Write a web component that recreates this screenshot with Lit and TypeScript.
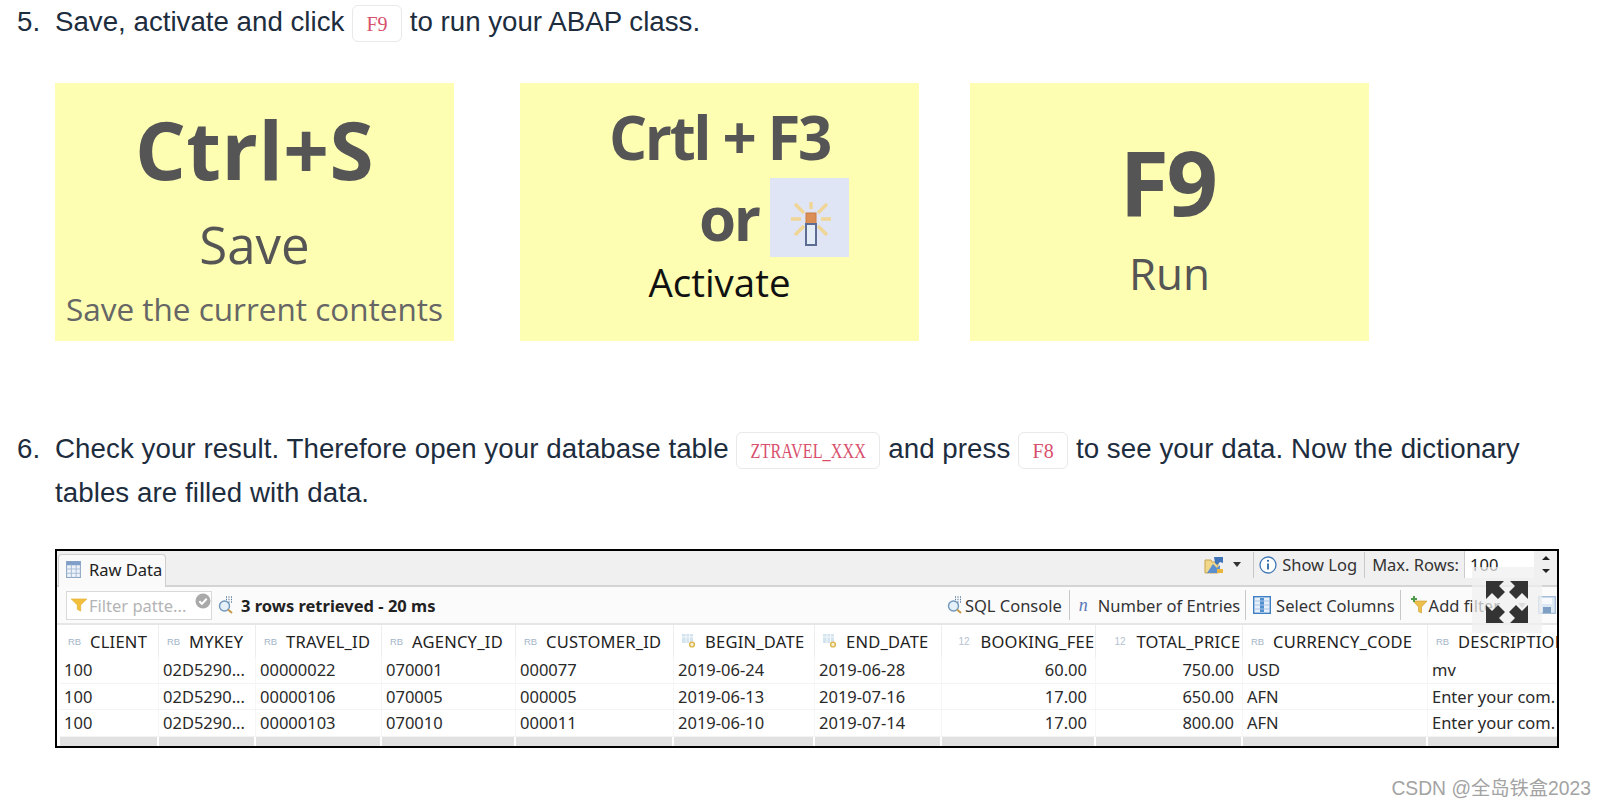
import { LitElement, html, css, svg } from "lit";
import { customElement } from "lit/decorators.js";

type Col = { name: string; kind: "rb" | "date" | "num" };
const cols: Col[] = [
  { name: "CLIENT", kind: "rb" },
  { name: "MYKEY", kind: "rb" },
  { name: "TRAVEL_ID", kind: "rb" },
  { name: "AGENCY_ID", kind: "rb" },
  { name: "CUSTOMER_ID", kind: "rb" },
  { name: "BEGIN_DATE", kind: "date" },
  { name: "END_DATE", kind: "date" },
  { name: "BOOKING_FEE", kind: "num" },
  { name: "TOTAL_PRICE", kind: "num" },
  { name: "CURRENCY_CODE", kind: "rb" },
  { name: "DESCRIPTION", kind: "rb" },
];
const rows = [
  ["100", "02D5290...", "00000022", "070001", "000077", "2019-06-24", "2019-06-28", "60.00", "750.00", "USD", "mv"],
  ["100", "02D5290...", "00000106", "070005", "000005", "2019-06-13", "2019-07-16", "17.00", "650.00", "AFN", "Enter your com."],
  ["100", "02D5290...", "00000103", "070010", "000011", "2019-06-10", "2019-07-14", "17.00", "800.00", "AFN", "Enter your com."],
];

const tableIcon = (w: number, h: number) => svg`<svg width=${w} height=${h} viewBox="0 0 14 16">
  <rect x=".5" y=".5" width="13" height="15" fill="#eef3fa" stroke="#8ea6c4"/>
  <rect x=".5" y=".5" width="13" height="3.500" fill="#7f9fc8"/>
  <path d="M.5 7.500h13M.5 11.500h13M5 3.500v12M9.500 3.500v12" stroke="#a9bdd6" fill="none"/></svg>`;
const dateIcon = svg`<svg width="14" height="14" viewBox="0 0 14 14">
  <rect x="0" y="0" width="11" height="9" fill="#d3e4ee"/>
  <path d="M0 3h11M4 0v9M7.500 0v9" stroke="#f4f8fb" fill="none"/>
  <circle cx="10" cy="10.500" r="2.400" fill="#f5f0d0" stroke="#dcb44a" stroke-width="1.400"/></svg>`;
const sqlIcon = svg`<svg width="16" height="18" viewBox="0 0 16 18">
  <circle cx="6.500" cy="10" r="5" fill="#e6f0f8" stroke="#6f97bd" stroke-width="1.400"/>
  <path d="M10 13.500l4 3.500" stroke="#c79a4a" stroke-width="2"/>
  <path d="M8 1h1M10.500 1h1M13 1h1M8 3.500h1M10.500 3.500h1M13 3.500h1M10.500 6h1M13 6h1" stroke="#5f7f9f" stroke-width="1.400"/></svg>`;
const funnel = svg`<svg width="16" height="14" viewBox="0 0 18 16"><path d="M0 1h18l-7 7v7l-4-2V8z" fill="#f2bf3c" stroke="#e0a830" stroke-width=".6"/></svg>`;
const check = svg`<svg width="16" height="16" viewBox="0 0 16 16"><circle cx="8" cy="8" r="7.500" fill="#a9a9a9"/><path d="M4.300 8.300l2.600 2.600 4.800-5.200" stroke="#fff" stroke-width="2" fill="none"/></svg>`;
const folder = svg`<svg width="20" height="18" viewBox="0 0 20 18">
  <path d="M1 4h6l1 2h6v11H1z" fill="#f0d78a" stroke="#c9a552"/>
  <path d="M3 17l6-9 4 4 3-3v8z" fill="#5b8fcf"/>
  <path d="M10 1h9v6l-3-1-3 3-2-2z" fill="#3f74b8"/>
  <path d="M13 13h6v4h-6z" fill="#e9b53c"/></svg>`;
const info = svg`<svg width="18" height="18" viewBox="0 0 18 18"><circle cx="9" cy="9" r="8" fill="#fff" stroke="#3f78b5" stroke-width="1.300"/><path d="M9 7.500v6" stroke="#2f68a5" stroke-width="1.800"/><circle cx="9" cy="4.800" r="1.100" fill="#2f68a5"/></svg>`;
const columnsIcon = svg`<svg width="18" height="18" viewBox="0 0 18 18">
  <rect x=".7" y=".7" width="16.600" height="16.600" fill="#e6effa" stroke="#3f7fc4" stroke-width="1.400"/>
  <rect x="7" y="2" width="4" height="14" fill="#4f8fd0"/>
  <path d="M2 5h14M2 9h14M2 13h14" stroke="#a9c4e4"/></svg>`;
const addFilter = svg`<svg width="19" height="18" viewBox="0 0 19 18">
  <path d="M3 5h14l-5.500 6v6l-3-1.500V11z" fill="#ecc04a" stroke="#c99c2c" stroke-width=".6"/>
  <path d="M4 0v6M1 3h6" stroke="#4f9a4f" stroke-width="2"/></svg>`;
const saveIcon = svg`<svg width="18" height="18" viewBox="0 0 18 18">
  <rect x=".7" y=".7" width="16.600" height="16.600" fill="#dce8f4" stroke="#9fb7d2" stroke-width="1.200"/>
  <rect x="4" y="2" width="10" height="6" fill="#f7fafd"/>
  <rect x="5" y="11" width="8" height="6" fill="#7e9fc4"/></svg>`;
const wand = svg`<svg width="79" height="79" viewBox="0 0 79 79">
  <g stroke="#efd596" stroke-width="3.400" fill="none">
    <path d="M41 24v7M21 41h10M51 41h10M25 26l9 9M57 26l-9 9M25 57l9-9M57 57l-9-9"/>
  </g>
  <rect x="36" y="35" width="10" height="11" fill="#dc8f55" stroke="#c87a45"/>
  <rect x="36" y="46" width="10" height="21" fill="#e4ecf6" stroke="#5c6c92" stroke-width="2"/></svg>`;
const expand = svg`<svg width="42" height="42" viewBox="0 0 42 42" fill="#333">
  <path d="M0 0h18l-5 5 6 6-7 7-6-6-6 6z"/>
  <path d="M42 0H24l5 5-6 6 7 7 6-6 6 6z"/>
  <path d="M0 42h18l-5-5 6-6-7-7-6 6-6-6z"/>
  <path d="M42 42H24l5-5-6-6 7-7 6 6 6-6z"/></svg>`;

@customElement("app-root")
export class AppRoot extends LitElement {
  static styles = css`
    :host {
      display: block;
      height: 807px;
      overflow: hidden;
      background: #fff;
      font-family: "Liberation Sans", Arial, sans-serif;
      color: #1d2d3e;
    }
    .item {
      display: grid;
      grid-template-columns: 55px 1fr;
      font-size: 27.700px;
      line-height: 44px;
      margin-right: 48px;
    }
    .item.wide { letter-spacing: 0.06px; }
    .num { padding-left: 17px; }
    code {
      display: inline-flex;
      align-items: center;
      justify-content: center;
      box-sizing: border-box;
      width: 144px;
      height: 37px;
      vertical-align: middle;
      border: 1px solid #e7e9ea;
      border-radius: 6px;
      background: #fff;
      color: #d8506c;
      font-family: "Liberation Serif", serif;
      font-size: 20px;
      line-height: 1;
    }
    code span { display: inline-block; transform: scaleX(0.81); }
    code.short { width: 50px; }
    code.short span { transform: none; }

    .panels { display: flex; margin: 39px 0 86px 55px; }
    .panel {
      box-sizing: border-box;
      width: 399px;
      height: 258px;
      background: #fdfeb2;
      display: flex;
      flex-direction: column;
      align-items: center;
      font-family: "Open Sans", sans-serif;
      color: #555;
    }
    .p1 { margin-right: 66px; padding-top: 26px; }
    .p2 { margin-right: 51px; padding-top: 24px; }
    .p3 { padding-top: 53px; }
    .k1 { font-size: 80px; font-weight: 700; line-height: 80px; letter-spacing: 0.5px; }
    .k2 { font-size: 60px; font-weight: 700; line-height: 60px; letter-spacing: -2.400px; }
    .k3 { font-size: 90px; font-weight: 700; line-height: 90px; letter-spacing: -2.500px; margin-right: 4px; }
    .s1 { font-size: 51px; line-height: 50px; margin-top: 30px; }
    .s2 { font-size: 31.500px; line-height: 40px; margin-top: 20px; color: #666; }
    .s3 { font-size: 44px; line-height: 50px; margin-top: 22px; }
    .or {
      display: flex;
      align-items: center;
      align-self: flex-start;
      margin: 11px 0 0 179px;
      gap: 11px;
      height: 79px;
    }
    .or svg { display: block; background: #e0e5f5; }
    .act { font-size: 38.500px; line-height: 40px; color: #111; margin-top: 5px; }

    .frame {
      position: relative;
      box-sizing: border-box;
      height: 199px;
      margin: 34px 47px 0 55px;
      border: 2px solid #000;
      overflow: hidden;
      font-family: "Noto Sans", sans-serif;
      font-size: 16.500px;
      color: #222;
      background: #fff;
    }
    .tabbar {
      display: flex;
      align-items: flex-end;
      box-sizing: border-box;
      height: 36px;
      background: #f0f0f0;
      border-bottom: 2px solid #d4d4d4;
    }
    .tab {
      box-sizing: border-box;
      display: flex;
      align-items: center;
      gap: 8px;
      height: 33px;
      width: 108px;
      margin-left: 1px;
      padding: 0 0 4px 7px;
      background: #fafafa;
      border: 1px solid #cfcfcf;
      border-bottom: none;
      border-radius: 4px 4px 0 0;
      position: relative;
      top: 2px;
      white-space: nowrap;
    }
    .tools {
      margin-left: auto;
      display: flex;
      align-items: center;
      height: 27px;
      color: #333;
      align-self: flex-start;
    }
    .tri { width: 0; height: 0; border: 4.500px solid transparent; border-top: 5px solid #333; border-bottom: none; }
    .sep { width: 1px; height: 26px; background: #c8c8c8; }
    .ml2 { margin-left: 2px; }
    .ml5 { margin-left: 5px; }
    .ml7 { margin-left: 7px; }
    .ml9 { margin-left: 9px; }
    .ml12 { margin-left: 12px; }
    .ml18 { margin-left: 18px; }
    .spin-in {
      width: 70px;
      height: 27px;
      box-sizing: border-box;
      margin-left: 5px;
      padding-left: 5px;
      background: #fff;
      border-left: 1px solid #ccc;
      line-height: 27px;
      color: #222;
    }
    .spin { width: 22px; height: 27px; display: flex; flex-direction: column; align-items: center; justify-content: space-around; margin-left: 1px; }
    .up { width: 0; height: 0; border: 4px solid transparent; border-bottom: 4px solid #222; border-top: none; }
    .dn { width: 0; height: 0; border: 4px solid transparent; border-top: 4px solid #222; border-bottom: none; }

    .filter {
      display: flex;
      align-items: center;
      box-sizing: border-box;
      height: 38px;
      background: #fbfbfb;
      border-bottom: 2px solid #e6e6e6;
    }
    .input {
      box-sizing: border-box;
      display: flex;
      align-items: center;
      width: 146px;
      height: 29px;
      margin-left: 9px;
      padding-left: 4px;
      background: #fff;
      border: 1px solid #d9d9d9;
      color: #b4b4b4;
      gap: 2px;
      white-space: nowrap;
    }
    .input .chk { margin-left: 7px; display: flex; position: relative; top: -4px; }
    .stat { margin-left: 6px; display: flex; align-items: center; gap: 7px; font-weight: 700; white-space: nowrap; }
    .right { margin-left: auto; display: flex; align-items: center; color: #333; white-space: nowrap; padding-right: 1px; }
    .right .sep { height: 30px; }
    .nico { font-family: "Liberation Serif", serif; font-style: italic; color: #5a78b8; font-size: 18px; width: 14px; }
    .tri.gray { border-top-color: #a8a8a8; }
    .tools svg, .right svg, .tab svg, .stat svg, .input svg { display: block; flex: none; }

    .grid { display: grid; grid-template-columns: 99px 97px 126px 134px 158px 141px 127px 154px 147px 185px 140px; margin-left: 3px; }
    .hd {
      box-sizing: border-box;
      height: 32px;
      display: flex;
      align-items: center;
      border-right: 1px solid #ededed;
      white-space: nowrap;
      overflow: hidden;
      color: #222;
      letter-spacing: 0.25px;
    }
    .ic { width: 22px; flex: none; padding-left: 8px; box-sizing: content-box; display: flex; align-items: center; font-size: 9.500px; letter-spacing: 0; color: #a3b5c8; font-family: "Liberation Sans", sans-serif; }
    .hd.num-col .ic { padding-left: 16.500px; font-size: 10px; color: #b5c2cf; }
    .hd.num-col:nth-child(9) .ic { padding-left: 18.500px; }
    .hd.date-col .ic { width: 23px; }
    .cell {
      box-sizing: border-box;
      height: 26.500px;
      line-height: 26.500px;
      padding-left: 4px;
      border-bottom: 1px solid #f4f4f4;
      border-right: 1px solid #f6f6f6;
      white-space: nowrap;
      overflow: hidden;
      color: #2a2a2a;
    }
    .cell.r { text-align: right; padding: 0 8px 0 0; }
    .band { height: 14px; background: #e1e1e1; border-right: 2px solid #fff; box-sizing: border-box; }

    .overlay {
      position: absolute;
      left: 1415px;
      top: 16px;
      box-sizing: border-box;
      width: 70px;
      height: 66px;
      padding-top: 3px;
      background: rgba(240, 240, 240, 0.72);
      display: flex;
      align-items: center;
      justify-content: center;
    }
    .overlay svg { display: block; }
    .mark {
      margin-top: 29px;
      padding-right: 15px;
      text-align: right;
      font-size: 19.300px;
      line-height: 24px;
      color: #a3a3a3;
      font-family: "Liberation Sans", "Noto Sans CJK SC", sans-serif;
    }
  `;

  private head(c: Col) {
    const icon = c.kind === "rb" ? "RB" : c.kind === "num" ? "12" : dateIcon;
    return html`<div class="hd ${c.kind === "num" ? "num-col" : c.kind === "date" ? "date-col" : ""}">
      <span class="ic">${icon}</span><span>${c.name}</span>
    </div>`;
  }

  render() {
    return html`
      <div class="item">
        <div class="num">5.</div>
        <div>Save, activate and click <code class="short"><span>F9</span></code> to run your ABAP class.</div>
      </div>
      <div class="panels">
        <div class="panel p1">
          <div class="k1">Ctrl+S</div>
          <div class="s1">Save</div>
          <div class="s2">Save the current contents</div>
        </div>
        <div class="panel p2">
          <div class="k2">Crtl + F3</div>
          <div class="or"><span class="k2">or</span>${wand}</div>
          <div class="act">Activate</div>
        </div>
        <div class="panel p3">
          <div class="k3">F9</div>
          <div class="s3">Run</div>
        </div>
      </div>
      <div class="item wide">
        <div class="num">6.</div>
        <div>Check your result. Therefore open your database table <code><span>ZTRAVEL_XXX</span></code> and press <code class="short"><span>F8</span></code> to see your data. Now the dictionary tables are filled with data.</div>
      </div>
      <div class="frame">
        <div class="tabbar">
          <div class="tab">${tableIcon(15, 17)}<span>Raw Data</span></div>
          <div class="tools">
            ${folder}<span class="tri ml9"></span><span class="sep ml12"></span>
            <span class="ml5">${info}</span><span class="ml5">Show Log</span>
            <span class="sep ml7"></span><span class="ml7">Max. Rows:</span>
            <span class="spin-in">100</span>
            <span class="spin"><span class="up"></span><span class="dn"></span></span>
          </div>
        </div>
        <div class="filter">
          <div class="input">${funnel}<span>Filter patte...</span><span class="chk">${check}</span></div>
          <div class="stat">${sqlIcon}<span>3 rows retrieved - 20 ms</span></div>
          <div class="right">
            ${sqlIcon}<span class="ml2">SQL Console</span><span class="sep ml7"></span>
            <span class="nico ml9"><i>n</i></span><span class="ml5">Number of Entries</span><span class="sep ml5"></span>
            <span class="ml7">${columnsIcon}</span><span class="ml5">Select Columns</span><span class="sep ml5"></span>
            <span class="ml9">${addFilter}</span><span>Add filter</span>
            <span class="tri gray ml18"></span><span class="ml12">${saveIcon}</span>
          </div>
        </div>
        <div class="grid">
          ${cols.map((c) => this.head(c))}
          ${rows.map((r) =>
            r.map((v, i) => html`<div class="cell ${i === 7 || i === 8 ? "r" : ""}">${v}</div>`)
          )}
          ${cols.map(() => html`<div class="band"></div>`)}
        </div>
        <div class="overlay">${expand}</div>
      </div>
      <div class="mark">CSDN @全岛铁盒2023</div>
    `;
  }
}
